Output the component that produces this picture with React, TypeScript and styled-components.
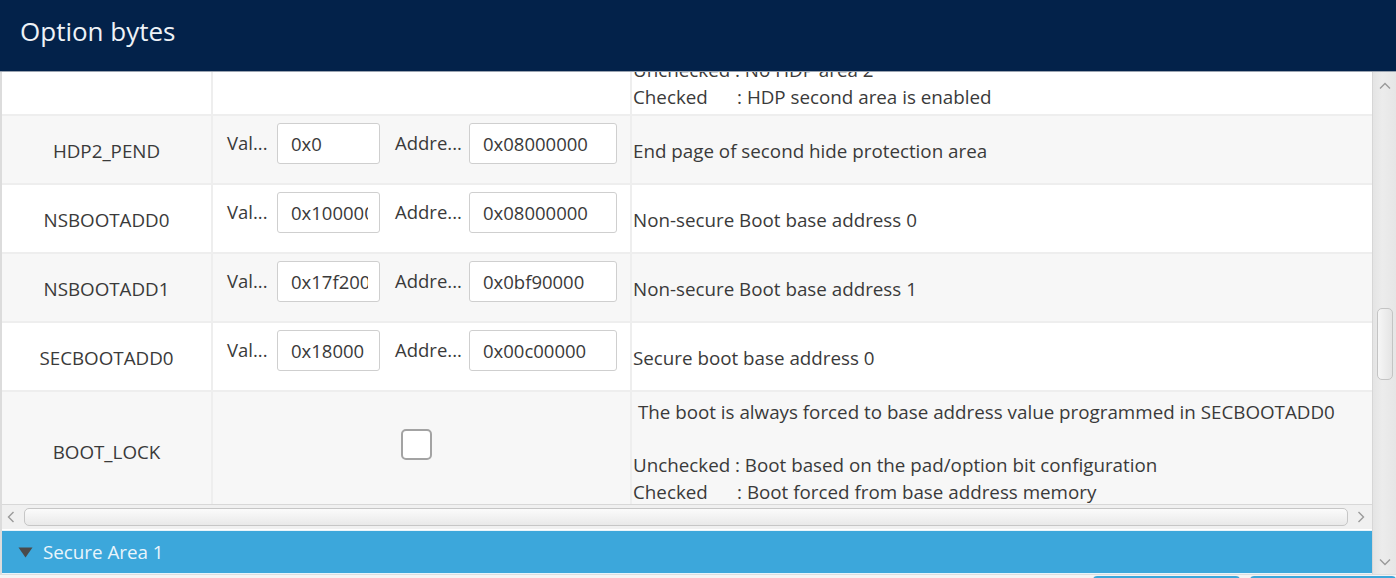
import React from "react";
import styled, { createGlobalStyle } from "styled-components";

const GlobalStyle = createGlobalStyle`
  html, body { margin: 0; padding: 0; overflow: hidden; background: #ffffff; }
  body { font-family: "Open Sans", "Noto Sans", sans-serif; color: #3a3a3a; }
  * { box-sizing: border-box; }
`;

const Frame = styled.div`
  width: 1396px;
  height: 578px;
  display: flex;
  flex-direction: column;
  overflow: hidden;
`;

const Header = styled.header`
  height: 72px;
  flex: none;
  background: #03224a;
  border-bottom: 1px solid #9aa3b0;
  display: flex;
  align-items: center;
  padding: 0 0 9px 20px;
`;

const Title = styled.h1`
  margin: 0;
  font-size: 26px;
  font-weight: 400;
  color: #eef2f7;
  letter-spacing: 0;
`;

const Body = styled.div`
  height: 502px;
  flex: none;
  display: flex;
`;

const ContentCol = styled.div`
  flex: 1;
  display: flex;
  flex-direction: column;
  border-left: 2px solid #dcdcdc;
  min-width: 0;
`;

const Viewport = styled.div`
  height: 432px;
  flex: none;
  overflow: hidden;
`;

const Table = styled.div`
  margin-top: -75px;
  display: flex;
  flex-direction: column;
`;

const Row = styled.div<{ $alt: boolean; $tall: boolean }>`
  display: grid;
  grid-template-columns: 211px 419px 1fr;
  height: ${(p) => (p.$tall ? 119 : 69)}px;
  background: ${(p) => (p.$alt ? "#f7f7f7" : "#ffffff")};
  border-bottom: 2px solid #eeeeee;
`;

const NameCell = styled.div`
  border-right: 2px solid #eeeeee;
  display: flex;
  align-items: center;
  justify-content: center;
  font-size: 18.8px;
  padding: 2px 0 0 0;
`;

const ValueCell = styled.div<{ $center: boolean }>`
  border-right: 2px solid #eeeeee;
  display: flex;
  align-items: ${(p) => (p.$center ? "center" : "flex-start")};
  justify-content: ${(p) => (p.$center ? "center" : "flex-start")};
  padding: ${(p) => (p.$center ? "0 10px 12px 0" : "7px 0 0 14px")};
`;

const FieldLabel = styled.span<{ $w: number }>`
  width: ${(p) => p.$w}px;
  flex: none;
  font-size: 18.5px;
  line-height: 40px;
  white-space: nowrap;
`;

const Field = styled.input<{ $w: number; $gapRight: number }>`
  width: ${(p) => p.$w}px;
  height: 41px;
  flex: none;
  margin-right: ${(p) => p.$gapRight}px;
  border: 1px solid #cfcfcf;
  border-radius: 3px;
  background: #ffffff;
  padding: 0 11px 0 13px;
  font-family: "Open Sans", "Noto Sans", sans-serif;
  font-size: 18.5px;
  color: #3a3a3a;
  outline: none;
`;

const CheckBox = styled.span`
  width: 31px;
  height: 31px;
  border: 2px solid #a3a3a3;
  border-radius: 5px;
  background: #ffffff;
  display: block;
`;

const DescCell = styled.div`
  display: flex;
  flex-direction: column;
  justify-content: center;
  padding: 3px 0 0 1px;
  font-size: 18.8px;
  line-height: 26.7px;
  white-space: pre;
  overflow: hidden;
`;

const HScroll = styled.div`
  height: 25px;
  flex: none;
  background: #f0f0f0;
  border-top: 1px solid #d8d8d8;
  display: flex;
  align-items: center;
  padding: 0 6px 0 4px;
  gap: 8px;
`;

const Arrow = styled.span`
  width: 10px;
  flex: none;
  display: flex;
  align-items: center;
  justify-content: center;
  color: #9a9a9a;
`;

const HThumb = styled.div`
  flex: 1;
  height: 18px;
  border: 1px solid #c6c6c6;
  border-radius: 5px;
  background: linear-gradient(#fbfbfb, #e9e9e9);
`;

const SectionBar = styled.div`
  height: 44px;
  flex: none;
  margin-top: 1px;
  background: #3ca7db;
  border-top: 1px solid #e8f4fa;
  border-bottom: 1px solid #e8f4fa;
  display: flex;
  align-items: center;
  padding-left: 16px;
  gap: 10px;
  font-size: 18.8px;
  color: #eaf5fb;
`;

const VScroll = styled.div`
  width: 24px;
  flex: none;
  background: linear-gradient(90deg, #e4e4e4, #ececec 40%, #e6e6e6);
  border-left: 1px solid #d6d6d6;
  display: flex;
  flex-direction: column;
  align-items: center;
  padding: 6px 0 4px;
`;

const VArrow = styled.span`
  height: 16px;
  display: flex;
  align-items: center;
  justify-content: center;
  color: #9a9a9a;
`;

const VTrack = styled.div`
  flex: 1;
  width: 100%;
  display: flex;
  flex-direction: column;
  align-items: center;
  padding-top: 214px;
`;

const VThumb = styled.div`
  width: 16px;
  height: 72px;
  border: 1px solid #c4c4c4;
  border-radius: 5px;
  background: linear-gradient(90deg, #f6f6f6, #e4e4e4);
`;

const Footer = styled.div`
  height: 4px;
  flex: none;
  border-top: 1px solid #dddddd;
  background: #f4f4f4;
  display: flex;
  justify-content: flex-end;
  gap: 10px;
  padding-top: 1px;
`;

const FooterButton = styled.div<{ $w: number }>`
  width: ${(p) => p.$w}px;
  height: 8px;
  background: #3ca7db;
  border-radius: 4px 4px 0 0;
`;

type Item =
  | { kind: "fields"; name: string; value: string; address: string; desc: string }
  | { kind: "check"; name: string; desc: string };

const items: Item[] = [
  {
    kind: "check",
    name: "HDP2_EN",
    desc: "Enable second hide protection area\n\nUnchecked : No HDP area 2\nChecked      : HDP second area is enabled",
  },
  { kind: "fields", name: "HDP2_PEND", value: "0x0", address: "0x08000000", desc: "End page of second hide protection area" },
  { kind: "fields", name: "NSBOOTADD0", value: "0x100000", address: "0x08000000", desc: "Non-secure Boot base address 0" },
  { kind: "fields", name: "NSBOOTADD1", value: "0x17f200", address: "0x0bf90000", desc: "Non-secure Boot base address 1" },
  { kind: "fields", name: "SECBOOTADD0", value: "0x18000", address: "0x00c00000", desc: "Secure boot base address 0" },
  {
    kind: "check",
    name: "BOOT_LOCK",
    desc: " The boot is always forced to base address value programmed in SECBOOTADD0\n\nUnchecked : Boot based on the pad/option bit configuration\nChecked      : Boot forced from base address memory",
  },
];

const ChevronLeft = () => (
  <svg width="8" height="12" viewBox="0 0 8 12">
    <path d="M6.5 1 L1.5 6 L6.5 11" fill="none" stroke="currentColor" strokeWidth="1.4" />
  </svg>
);
const ChevronRight = () => (
  <svg width="8" height="12" viewBox="0 0 8 12">
    <path d="M1.5 1 L6.5 6 L1.5 11" fill="none" stroke="currentColor" strokeWidth="1.4" />
  </svg>
);
const ChevronUp = () => (
  <svg width="12" height="8" viewBox="0 0 12 8">
    <path d="M1 6.5 L6 1.5 L11 6.5" fill="none" stroke="currentColor" strokeWidth="1.4" />
  </svg>
);
const ChevronDown = () => (
  <svg width="12" height="8" viewBox="0 0 12 8">
    <path d="M1 1.5 L6 6.5 L11 1.5" fill="none" stroke="currentColor" strokeWidth="1.4" />
  </svg>
);
const Caret = () => (
  <svg width="15" height="11" viewBox="0 0 15 11">
    <path d="M0.5 0.5 L14.5 0.5 L7.5 10.5 Z" fill="#4a4a4a" />
  </svg>
);

export default function App() {
  return (
    <Frame>
      <GlobalStyle />
      <Header>
        <Title>Option bytes</Title>
      </Header>
      <Body>
        <ContentCol>
          <Viewport>
            <Table>
              {items.map((it, i) => (
                <Row key={it.name} $alt={i % 2 === 1} $tall={it.kind === "check"}>
                  <NameCell>{it.name}</NameCell>
                  {it.kind === "fields" ? (
                    <ValueCell $center={false}>
                      <FieldLabel $w={50}>Val...</FieldLabel>
                      <Field $w={103} $gapRight={15} value={it.value} readOnly />
                      <FieldLabel $w={74}>Addre...</FieldLabel>
                      <Field $w={148} $gapRight={0} value={it.address} readOnly />
                    </ValueCell>
                  ) : (
                    <ValueCell $center={true}>
                      <CheckBox />
                    </ValueCell>
                  )}
                  <DescCell>{it.desc}</DescCell>
                </Row>
              ))}
            </Table>
          </Viewport>
          <HScroll>
            <Arrow>
              <ChevronLeft />
            </Arrow>
            <HThumb />
            <Arrow>
              <ChevronRight />
            </Arrow>
          </HScroll>
          <SectionBar>
            <Caret />
            <span>Secure Area 1</span>
          </SectionBar>
        </ContentCol>
        <VScroll>
          <VArrow>
            <ChevronUp />
          </VArrow>
          <VTrack>
            <VThumb />
          </VTrack>
          <VArrow>
            <ChevronDown />
          </VArrow>
        </VScroll>
      </Body>
      <Footer>
        <FooterButton $w={147} />
        <FooterButton $w={146} />
      </Footer>
    </Frame>
  );
}
